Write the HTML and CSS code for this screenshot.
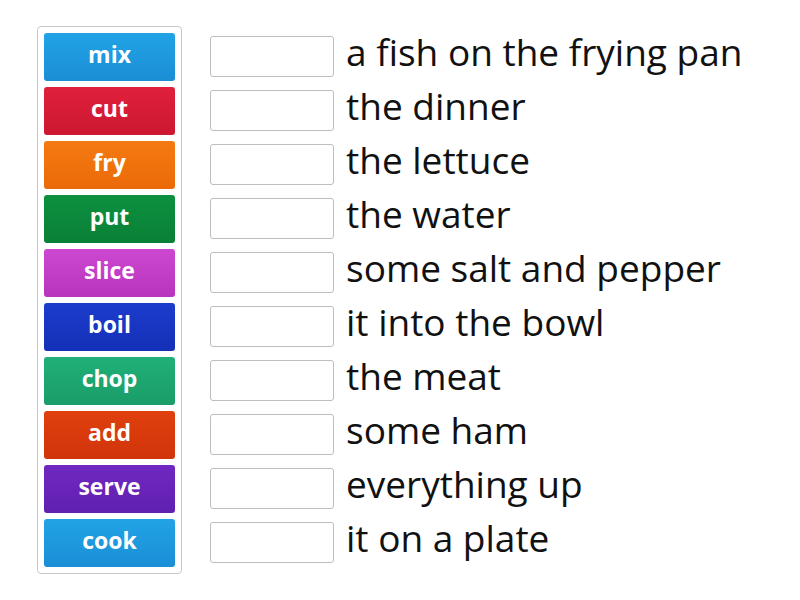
FILE: index.html
```html
<!DOCTYPE html>
<html>
<head>
<meta charset="utf-8">
<link rel="stylesheet" href="styles.css">
</head>
<body>
<div class="page">
  <div class="bank">
    <div class="tile c-mix">mix</div>
    <div class="tile c-cut">cut</div>
    <div class="tile c-fry">fry</div>
    <div class="tile c-put">put</div>
    <div class="tile c-slice">slice</div>
    <div class="tile c-boil">boil</div>
    <div class="tile c-chop">chop</div>
    <div class="tile c-add">add</div>
    <div class="tile c-serve">serve</div>
    <div class="tile c-cook">cook</div>
  </div>
  <div class="rows">
    <div class="row"><div class="slot"></div><span class="phrase">a fish on the frying pan</span></div>
    <div class="row"><div class="slot"></div><span class="phrase">the dinner</span></div>
    <div class="row"><div class="slot"></div><span class="phrase">the lettuce</span></div>
    <div class="row"><div class="slot"></div><span class="phrase">the water</span></div>
    <div class="row"><div class="slot"></div><span class="phrase">some salt and pepper</span></div>
    <div class="row"><div class="slot"></div><span class="phrase">it into the bowl</span></div>
    <div class="row"><div class="slot"></div><span class="phrase">the meat</span></div>
    <div class="row"><div class="slot"></div><span class="phrase">some ham</span></div>
    <div class="row"><div class="slot"></div><span class="phrase">everything up</span></div>
    <div class="row"><div class="slot"></div><span class="phrase">it on a plate</span></div>
  </div>
</div>
</body>
</html>
```
FILE: styles.css
```css
html, body {
  margin: 0;
  padding: 0;
  background: #fff;
  font-family: "Open Sans", "Liberation Sans", sans-serif;
}
.page {
  display: flex;
  align-items: flex-start;
  padding: 26px 0 0 37px;
}
.bank {
  box-sizing: border-box;
  width: 145px;
  padding: 6px;
  border: 1px solid #c8c8c8;
  border-radius: 4px;
  display: flex;
  flex-direction: column;
  gap: 6px;
}
.tile {
  height: 48px;
  border-radius: 3px;
  color: #fff;
  font-weight: 700;
  font-size: 23px;
  line-height: 1;
  display: flex;
  align-items: center;
  justify-content: center;
  padding-bottom: 6px;
  box-sizing: border-box;
}
.c-mix { background: linear-gradient(#22a3e6, #1a8ed6); }
.c-cut { background: linear-gradient(#e0203c, #cc1830); }
.c-fry { background: linear-gradient(#f57a12, #ea6a08); }
.c-put { background: linear-gradient(#0c9040, #0a8036); }
.c-slice { background: linear-gradient(#cc48d0, #b834bc); }
.c-boil { background: linear-gradient(#1c3ccc, #1430b8); }
.c-chop { background: linear-gradient(#20b078, #1a9c68); }
.c-add { background: linear-gradient(#e0400e, #d0340a); }
.c-serve { background: linear-gradient(#7028c0, #6020b0); }
.c-cook { background: linear-gradient(#22a3e6, #1a8ed6); }
.rows {
  margin-left: 28px;
  padding-top: 10px;
  display: flex;
  flex-direction: column;
  gap: 13px;
}
.row {
  display: flex;
  align-items: center;
  height: 41px;
}
.slot {
  box-sizing: border-box;
  width: 124px;
  height: 41px;
  border: 1px solid #bdbdbd;
  border-radius: 3px;
  background: #fff;
  flex: none;
}
.phrase {
  margin-left: 12px;
  font-size: 37px;
  color: #111;
  white-space: nowrap;
  line-height: 1;
  padding-bottom: 10px;
}
```
